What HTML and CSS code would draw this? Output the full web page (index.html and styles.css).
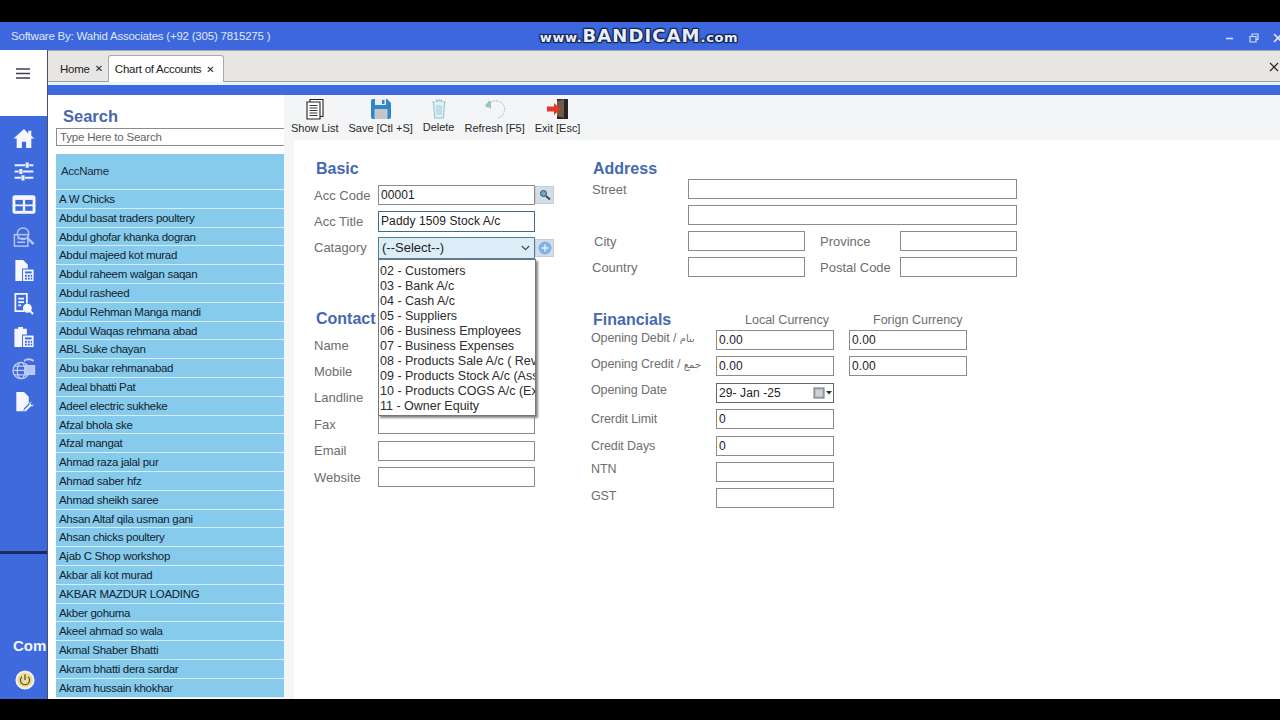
FILE: index.html
```html
<!DOCTYPE html>
<html lang="en">
<head>
<meta charset="utf-8">
<title>Chart of Accounts</title>
<link rel="stylesheet" href="styles.css">
</head>
<body>
<div class="screen">
  <div class="letterbox-top"></div>
  <header class="titlebar">
    <span class="title-text">Software By: Wahid Associates (+92 (305) 7815275 )</span>
    <div class="win-controls">
      <svg width="10" height="10" viewBox="0 0 10 10"><path d="M1 5.5h7" stroke="#cfdcf8" stroke-width="1.6"/></svg>
      <svg width="10" height="10" viewBox="0 0 10 10" fill="none" stroke="#cfdcf8" stroke-width="1.2"><path d="M1 3.5h6v5.5H1zM3 3.5V1h6v5.5H7"/></svg>
      <svg width="10" height="10" viewBox="0 0 10 10" fill="none" stroke="#dfe8fb" stroke-width="1.6"><path d="M1 1l8 8M9 1l-8 8"/></svg>
    </div>
    <div class="watermark">www.<b>BANDICAM</b>.com</div>
  </header>
  <div class="app">
    <nav class="nav">
      <div class="nav-top">
        <svg width="14" height="11" viewBox="0 0 14 11"><path d="M0 1h14M0 5.5h14M0 10h14" stroke="#3c3f55" stroke-width="1.7"/></svg>
      </div>
      <div class="nav-body">
        <div class="nav-icons">
          <svg width="22" height="22" viewBox="0 0 22 22"><path d="M11 2L1 11h3v9h5v-6h4v6h5v-9h3l-3-2.700V3.500h-3v2.600z" fill="#f4f7ff"/></svg>
          <svg width="22" height="22" viewBox="0 0 22 22" stroke="#eef2ff" stroke-width="2" fill="none"><path d="M2 5h10M16 5h4M2 11h4M10 11h10M2 17h6M12 17h8"/><path d="M14 2.500v5M8 8.500v5M10 14.500v5" stroke-width="3"/></svg>
          <svg width="22" height="20" viewBox="0 0 22 20"><rect x="1" y="2" width="20" height="16" rx="2" fill="#f4f7ff"/><g fill="#3e6ade"><rect x="3.500" y="6" width="6.500" height="4"/><rect x="3.500" y="11.500" width="6.500" height="4"/><rect x="12" y="6" width="6.500" height="4"/><rect x="12" y="11.500" width="6.500" height="4"/></g></svg>
          <svg class="dim" width="24" height="24" viewBox="0 0 24 24" fill="none" stroke="#dfe6fb" stroke-width="1.500"><rect x="2" y="9" width="14" height="12"/><circle cx="11" cy="8" r="6"/><path d="M15.500 12.500l6.500 6.500" stroke-width="2.500"/><path d="M5 13h8M5 17h8"/></svg>
          <svg width="22" height="24" viewBox="0 0 22 24"><path d="M2 1h8l5 5v4H9v13H2z" fill="#f6f8ff"/><rect x="10" y="11" width="11" height="12" fill="#f6f8ff"/><g fill="#3e6ade"><rect x="12" y="13" width="7" height="2"/><rect x="12" y="16.500" width="2" height="2"/><rect x="15" y="16.500" width="2" height="2"/><rect x="18" y="16.500" width="1.500" height="2"/><rect x="12" y="19.500" width="2" height="2"/><rect x="15" y="19.500" width="2" height="2"/><rect x="18" y="19.500" width="1.500" height="2"/></g></svg>
          <svg width="22" height="24" viewBox="0 0 22 24" fill="none" stroke="#f6f8ff" stroke-width="1.800"><path d="M11 20H2V2h12v10"/><path d="M5 7h6M5 10.500h6M5 14h3"/><circle cx="14.500" cy="17" r="3.800" fill="#f6f8ff"/><path d="M17.500 20l3 3" stroke-width="2.200"/></svg>
          <svg width="22" height="24" viewBox="0 0 22 24"><path d="M1 4h4V2h5v2h4v6H9v13H1z" fill="#f6f8ff"/><rect x="10" y="11" width="11" height="12" fill="#f6f8ff"/><g fill="#3e6ade"><rect x="12" y="13" width="7" height="2"/><rect x="12" y="16.500" width="2" height="2"/><rect x="15" y="16.500" width="2" height="2"/><rect x="18" y="16.500" width="1.500" height="2"/><rect x="12" y="19.500" width="2" height="2"/><rect x="15" y="19.500" width="2" height="2"/><rect x="18" y="19.500" width="1.500" height="2"/></g></svg>
          <svg class="dim" width="26" height="24" viewBox="0 0 26 24" fill="none" stroke="#eef2ff" stroke-width="1.300"><circle cx="10" cy="13" r="8.500"/><ellipse cx="10" cy="13" rx="4" ry="8.500"/><path d="M1.500 13h17M3 8.500h14M3 17.500h14"/><rect x="14" y="8" width="10" height="9" fill="#dfe6fb"/><path d="M13 3c3-2 7-2 10 0" stroke-width="2"/></svg>
          <svg width="22" height="24" viewBox="0 0 22 24"><path d="M3 1h8l5 5v7l-5 5 1 3H3z" fill="#f6f8ff"/><path d="M19.500 11.500c-2-.7-3.800.8-3.300 2.800l-5.700 5.700 2 2 5.700-5.700c2 .5 3.500-1.300 2.800-3.300l-1.700 1.600-1.300-1.300z" fill="#f6f8ff" stroke="#3e6ade" stroke-width=".8"/></svg>
        </div>
        <div class="nav-rule"></div>
        <div class="nav-com">Com</div>
        <svg class="power" width="20" height="20" viewBox="0 0 20 20"><circle cx="10" cy="10" r="8.600" fill="#f2dc8a" stroke="#eef0f5" stroke-width="2"/><path d="M6.800 6.800a4.600 4.600 0 1 0 6.400 0" fill="none" stroke="#5a5a50" stroke-width="1.300"/><path d="M10 4.500v5.500" stroke="#5a5a50" stroke-width="1.400"/></svg>
      </div>
    </nav>
    <main class="main">
      <div class="tabstrip">
        <div class="tab"><span>Home</span><span class="tab-x">✕</span></div>
        <div class="tab tab-active"><span>Chart of Accounts</span><span class="tab-x">✕</span></div>
        <svg class="strip-close" width="10" height="10" viewBox="0 0 10 10"><path d="M1 1l8 8M9 1l-8 8" stroke="#222" stroke-width="1.200"/></svg>
      </div>
      <div class="accent"></div>
      <div class="content">
        <section class="search-panel">
          <h2 class="search-title">Search</h2>
          <div class="search-box">Type Here to Search</div>
          <div class="list">
            <div class="list-head">AccName</div>
            <div class="row">A W Chicks</div>
            <div class="row">Abdul basat traders poultery</div>
            <div class="row">Abdul ghofar khanka dogran</div>
            <div class="row">Abdul majeed kot murad</div>
            <div class="row">Abdul raheem walgan saqan</div>
            <div class="row">Abdul rasheed</div>
            <div class="row">Abdul Rehman Manga mandi</div>
            <div class="row">Abdul Waqas rehmana abad</div>
            <div class="row">ABL Suke chayan</div>
            <div class="row">Abu bakar rehmanabad</div>
            <div class="row">Adeal bhatti Pat</div>
            <div class="row">Adeel electric sukheke</div>
            <div class="row">Afzal bhola ske</div>
            <div class="row">Afzal mangat</div>
            <div class="row">Ahmad raza jalal pur</div>
            <div class="row">Ahmad saber hfz</div>
            <div class="row">Ahmad sheikh saree</div>
            <div class="row">Ahsan Altaf qila usman gani</div>
            <div class="row">Ahsan chicks poultery</div>
            <div class="row">Ajab C Shop workshop</div>
            <div class="row">Akbar ali kot murad</div>
            <div class="row">AKBAR MAZDUR LOADING</div>
            <div class="row">Akber gohuma</div>
            <div class="row">Akeel ahmad so wala</div>
            <div class="row">Akmal Shaber Bhatti</div>
            <div class="row">Akram bhatti dera sardar</div>
            <div class="row">Akram hussain khokhar</div>
          </div>
        </section>
        <section class="work">
          <div class="toolbar">
            <div class="tool">
              <svg width="20" height="22" viewBox="0 0 20 22" fill="#fff" stroke="#222" stroke-width="1.100"><path d="M5 1.500h13v17H5z"/><path d="M2 4h13v17H2z"/><path d="M4.500 7.500h8M4.500 10h8M4.500 12.500h8M4.500 15h8M4.500 17.500h8" stroke-width=".9"/></svg>
              <span>Show List</span>
            </div>
            <div class="tool">
              <svg width="22" height="22" viewBox="0 0 22 22"><path d="M3 1h14l4 4v14a2 2 0 0 1-2 2H3a2 2 0 0 1-2-2V3a2 2 0 0 1 2-2z" fill="#2f86c8"/><rect x="5" y="1" width="11" height="6" fill="#e6eef5"/><rect x="12" y="2" width="2.500" height="4" fill="#2f86c8"/><rect x="4.500" y="11" width="13" height="10" fill="#c3c6c9"/></svg>
              <span>Save [Ctl +S]</span>
            </div>
            <div class="tool">
              <svg width="16" height="21" viewBox="0 0 16 21" fill="#e3f0f5" stroke="#8fc0d0" stroke-width="1"><path d="M1 4h14M5.500 4V2h5v2"/><path d="M2.500 4l1 16h9l1-16"/><path d="M6 7v10M8 7v10M10 7v10" stroke-width=".8"/></svg>
              <span>Delete</span>
            </div>
            <div class="tool">
              <svg width="24" height="22" viewBox="0 0 24 22" fill="none"><path d="M7 4.500c5-3.500 13-1.500 14.500 5 1 4.500-2 9-6.500 10.500" stroke="#a9c4bd" stroke-width="1" stroke-dasharray="2 1"/><path d="M7 4.500L2 8.500l3 1V2.500z" fill="#8fc9bb"/><path d="M2 6.500l6 4.500V2.500z" fill="#8fc9bb"/></svg>
              <span>Refresh [F5]</span>
            </div>
            <div class="tool">
              <svg width="23" height="22" viewBox="0 0 23 22"><rect x="11" y="1" width="11" height="20" fill="#2b2320"/><path d="M11 3l7-2v19l-7-2z" fill="#6d5a4b"/><path d="M1 8.500h7V5l6.500 6L8 17v-3.500H1z" fill="#e23a26"/></svg>
              <span>Exit [Esc]</span>
            </div>
          </div>
          <div class="form">
            <div class="col col-left">
              <h3 class="heading">Basic</h3>
              <div class="field first"><label>Acc Code</label><div class="input">00001</div><span class="mini-btn"><svg width="12" height="12" viewBox="0 0 12 12"><circle cx="4.500" cy="4.500" r="3" fill="#6fa8c8" stroke="#2d4a6a"/><path d="M7 7l4 3.500" stroke="#2d4a6a" stroke-width="2"/></svg></span></div>
              <div class="field"><label>Acc Title</label><div class="input input-focus">Paddy 1509 Stock A/c</div></div>
              <div class="field">
                <label>Catagory</label>
                <div class="select"><span>(--Select--)</span><svg width="9" height="6" viewBox="0 0 9 6"><path d="M.8 1l3.700 3.700L8.200 1" fill="none" stroke="#444" stroke-width="1.100"/></svg></div>
                <span class="mini-btn"><svg width="14" height="14" viewBox="0 0 14 14"><circle cx="7" cy="7" r="6.500" fill="#7fb2e6"/><path d="M7 3.500v7M3.500 7h7" stroke="#e8f2fb" stroke-width="1.500"/></svg></span>
                <div class="dropdown">
                  <div class="drop-inner">
                    <div class="opt">01 - Fixed Assets</div>
                    <div class="opt">02 - Customers</div>
                    <div class="opt">03 - Bank A/c</div>
                    <div class="opt">04 - Cash A/c</div>
                    <div class="opt">05 - Suppliers</div>
                    <div class="opt">06 - Business Employees</div>
                    <div class="opt">07 - Business Expenses</div>
                    <div class="opt">08 - Products Sale A/c ( Revenue)</div>
                    <div class="opt">09 - Products Stock A/c (Assets)</div>
                    <div class="opt">10 - Products COGS A/c (Expense)</div>
                    <div class="opt">11 - Owner Equity</div>
                  </div>
                </div>
              </div>
              <h3 class="heading heading-2">Contact</h3>
              <div class="field first-2"><label>Name</label><div class="input"></div></div>
              <div class="field"><label>Mobile</label><div class="input"></div></div>
              <div class="field"><label>Landline</label><div class="input"></div></div>
              <div class="field"><label>Fax</label><div class="input"></div></div>
              <div class="field"><label>Email</label><div class="input"></div></div>
              <div class="field"><label>Website</label><div class="input"></div></div>
            </div>
            <div class="col col-right">
              <h3 class="heading">Address</h3>
              <div class="addr first-addr"><label>Street</label><div class="input i-wide"></div></div>
              <div class="addr"><label></label><div class="input i-wide"></div></div>
              <div class="addr"><label class="lbl-city">City</label><div class="input i-half"></div><label class="lbl2">Province</label><div class="input i-half"></div></div>
              <div class="addr"><label>Country</label><div class="input i-half"></div><label class="lbl2">Postal Code</label><div class="input i-half"></div></div>
              <div class="fin-head"><h3 class="heading">Financials</h3><span class="cur cur-1">Local Currency</span><span class="cur cur-2">Forign Currency</span></div>
              <div class="fin"><label>Opening Debit / <bdi>بنام</bdi></label><div class="input i-fin">0.00</div><div class="input i-fin">0.00</div></div>
              <div class="fin"><label>Opening Credit / <bdi>جمع</bdi></label><div class="input i-fin">0.00</div><div class="input i-fin">0.00</div></div>
              <div class="fin"><label>Opening Date</label><div class="input i-fin i-date"><span>29- Jan -25</span><svg width="20" height="12" viewBox="0 0 20 12"><rect x="1" y="1" width="10" height="10" fill="#b9bdc2" stroke="#6d7278"/><path d="M3 4h6M3 6h6M3 8h6" stroke="#eef0f2" stroke-width=".8"/><path d="M13 4h6l-3 3.500z" fill="#333"/></svg></div></div>
              <div class="fin"><label class="lbl-low">Crerdit Limit</label><div class="input i-fin">0</div></div>
              <div class="fin"><label class="lbl-low">Credit Days</label><div class="input i-fin">0</div></div>
              <div class="fin"><label>NTN</label><div class="input i-fin"></div></div>
              <div class="fin"><label>GST</label><div class="input i-fin"></div></div>
            </div>
          </div>
        </section>
      </div>
    </main>
  </div>
  <div class="letterbox-bottom"></div>
</div>
</body>
</html>
```
FILE: styles.css
```css
* { box-sizing: border-box; }
html, body { margin: 0; padding: 0; background: #000; }
body { font-family: "Liberation Sans", Arial, sans-serif; color: #222; }
.screen { width: 1280px; height: 720px; display: flex; flex-direction: column; overflow: hidden; background: #000; }
.letterbox-top { height: 22px; flex: none; background: #000; }
.letterbox-bottom { height: 21px; flex: none; background: #000; }

.titlebar { position: relative; height: 28px; flex: none; background: #3c67dd; display: flex; align-items: center; padding: 0 0 0 11px; }
.title-text { color: #dfe8fb; font-size: 11.5px; letter-spacing: -.22px; margin-top: -1px; }
.win-controls { margin-left: auto; display: flex; gap: 14px; padding-right: 0; margin-right: -3px; margin-top: 4px; }
.watermark { position: absolute; left: 523px; top: 3px; width: 232px; text-align: center; color: #e8eefc; font: bold 13px "DejaVu Sans", sans-serif; letter-spacing: .6px; text-shadow: 0 0 2px #16234a, 1px 1px 1px #16234a, -1px -1px 1px #16234a, 1px -1px 1px #16234a, -1px 1px 1px #16234a; white-space: nowrap; }
.watermark b { font-size: 18px; letter-spacing: 1.1px; }

.app { flex: 1; display: flex; min-height: 0; background: #fff; }
.nav { width: 48px; flex: none; display: flex; flex-direction: column; border-right: 1px solid #45506e; }
.nav-top { height: 66px; flex: none; background: #fff; display: flex; justify-content: center; padding-top: 18px; padding-right: 1px; }
.nav-body { flex: 1; background: #3e6ade; display: flex; flex-direction: column; position: relative; }
.nav-icons { display: flex; flex-direction: column; align-items: center; height: 297px; padding-top: 6px; }
.nav-icons svg { height: 33px; flex: none; padding: 5px 0; width: 26px; overflow: visible; }
.dim { opacity: .75; }
.nav-rule { height: 3px; background: #1d2b63; margin-top: 138px; }
.nav-com { color: #f3f6ff; font-weight: bold; font-size: 15px; margin: 83px 0 0 13px; white-space: nowrap; width: 34px; overflow: hidden; }
.power { margin: 16px 0 0 15px; }

.main { flex: 1; min-width: 0; display: flex; flex-direction: column; }
.tabstrip { height: 32px; flex: none; background: #e8e6e5; border-top: 1px solid #a8a8a8; border-bottom: 1px solid #a0a0a0; display: flex; align-items: flex-end; padding-left: 6px; position: relative; }
.tab { height: 25px; display: flex; align-items: center; gap: 5px; font-size: 11.5px; letter-spacing: -.25px; color: #222; padding: 0 4px 0 6px; margin-bottom: 0; }
.tab-active { background: #fff; border: 1px solid #a8a8a8; border-bottom: 0; border-radius: 3px 3px 0 0; height: 27px; margin-left: 1px; margin-bottom: -1px; padding: 0 8px 0 6px; }
.tab-x { font-size: 10px; color: #222; font-family: "DejaVu Sans", sans-serif; }
.strip-close { position: absolute; right: 1px; top: 11px; }
.accent { height: 13px; flex: none; background: #3e6ade; border-top: 3px solid #e9f3fb; }
.content { flex: 1; display: flex; min-height: 0; background: #fff; }

.search-panel { width: 236px; flex: none; display: flex; flex-direction: column; padding: 0 0 0 8px; overflow: hidden; }
.search-title { margin: 12px 0 2px 7px; font-size: 16.5px; line-height: 19px; font-weight: bold; color: #4967ab; }
.search-box { height: 18px; border: 1px solid #8c8c8c; border-right: 0; font-size: 11.5px; letter-spacing: -.2px; color: #666; line-height: 16px; padding-left: 3px; }
.list { margin-top: 8px; overflow: hidden; flex: 1; }
.list-head { height: 36px; background: #86cbec; border-bottom: 1px solid #d5eef9; font-size: 11.500px; letter-spacing: -.3px; line-height: 35px; padding-left: 5px; color: #1c2b3a; }
.row { height: 18.8px; background: #86cbec; border-bottom: 1px solid #d5eef9; font-size: 11.500px; letter-spacing: -.3px; line-height: 18px; padding-left: 3px; color: #14222e; white-space: nowrap; }

.work { flex: 1; min-width: 0; display: flex; flex-direction: column; background: #f4f5f6; }
.toolbar { height: 45px; flex: none; display: flex; padding-left: 7px; padding-top: 3px; gap: 10px; }
.tool { display: flex; flex-direction: column; align-items: center; font-size: 11px; color: #2a2a2a; letter-spacing: -.02px; gap: 2px; white-space: nowrap; }
.form { flex: 1; min-height: 0; margin-left: 10px; background: #fff; display: flex; padding: 0 0 0 20px; color: #6a6a6a; }
.col { display: flex; flex-direction: column; }
.col-left { width: 277px; }
.heading { margin: 0; font-size: 16px; line-height: 19px; font-weight: bold; color: #4768b0; padding-left: 2px; height: 19px; margin-top: 19px; }
.heading-2 { margin-top: 45px; }
.field { position: relative; display: flex; align-items: center; height: 20px; margin-bottom: 6.400px; }
.field.first { margin-top: 7px; }
.first-2 { margin-top: 7px; }
.field label, .addr label, .fin label { font-size: 13px; color: #6e6e6e; white-space: nowrap; }
.field label { width: 64px; flex: none; }
.input { height: 20px; width: 157px; background: #fff; border: 1px solid #8b8b8b; font-size: 12px; line-height: 18px; padding-left: 2px; color: #222; flex: none; letter-spacing: .1px; }
.input-focus { border-color: #3a6f8e; height: 21px; background: #fff; }
.mini-btn { width: 19px; height: 18px; margin-left: 0; background: #d4dde6; border: 1px solid #c6ccd2; display: flex; align-items: center; justify-content: center; flex: none; }
.select { height: 22px; width: 157px; border: 1px solid #4d7f9c; background: #dcedf8; display: flex; align-items: center; justify-content: space-between; font-size: 13px; padding: 0 4px 0 3px; color: #222; flex: none; }
.dropdown { position: absolute; left: 64px; top: 21px; width: 158px; height: 157px; background: #fff; border: 1px solid #777; box-shadow: 2px 2px 2px #888; overflow: hidden; z-index: 2; }
.drop-inner { margin-top: -11px; }
.opt { height: 15px; line-height: 15px; font-size: 12.500px; color: #2c2c2c; padding-left: 1px; white-space: nowrap; }

.addr { display: flex; align-items: center; height: 20px; margin-bottom: 6px; }
.addr label { width: 97px; flex: none; padding-left: 1px; }
.first-addr { margin-top: 1px; }
.lbl-city { padding-left: 3px !important; }
.addr .lbl2 { width: 95px; padding-left: 15px; }
.i-wide { width: 329px; }
.i-half { width: 117px; }
.fin-head { position: relative; height: 38px; margin-top: 9px; }
.fin-head .heading { margin-top: 18px; }
.cur { position: absolute; top: 21px; font-size: 12.500px; color: #6e6e6e; white-space: nowrap; }
.cur-1 { left: 154px; }
.cur-2 { left: 282px; }
.fin { display: flex; align-items: center; height: 20px; margin-bottom: 6.400px; gap: 15px; }
.fin label { width: 110px; flex: none; margin-top: -5px; letter-spacing: -.1px; font-size: 12.500px; }
.fin label.lbl-low { margin-top: 0; }
.fin bdi { font-family: "DejaVu Sans", sans-serif; font-size: 10px; }
.i-fin { width: 118px; }
.i-date { display: flex; align-items: center; justify-content: space-between; padding-right: 0; border-color: #666; }
```
